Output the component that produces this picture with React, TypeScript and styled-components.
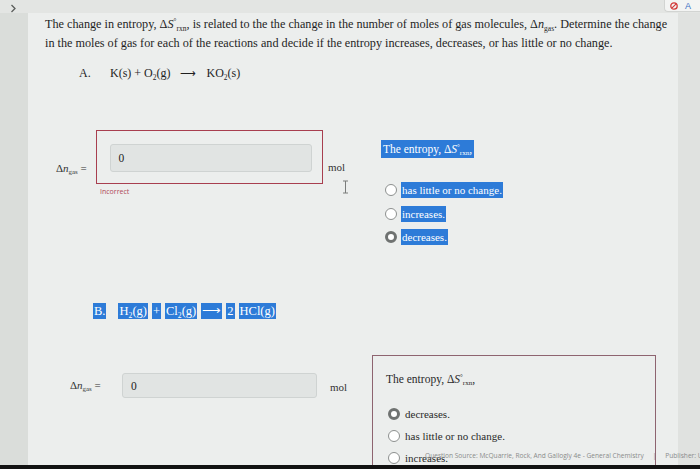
import React from "react";
import styled, { createGlobalStyle } from "styled-components";

const GlobalStyle = createGlobalStyle`
  html, body {
    margin: 0;
    padding: 0;
  }
  body {
    width: 700px;
    height: 469px;
    overflow: hidden;
    background: #e4e6e4;
    font-family: "Liberation Serif", "Times New Roman", serif;
    color: #1f1f1f;
  }
`;

const Page = styled.div`
  position: relative;
  width: 700px;
  height: 469px;
  display: flex;
  flex-direction: column;
  overflow: hidden;
`;

const TopStrip = styled.div`
  height: 14px;
  display: flex;
  justify-content: space-between;
  align-items: flex-start;
  background: #e3e5e3;
`;

const Chevron = styled.svg`
  margin: 4px 0 0 10px;
`;

const ToolButton = styled.div`
  width: 30px;
  height: 11px;
  background: #f3f4f3;
  border-left: 1px solid #d2d4d2;
  border-bottom: 1px solid #d2d4d2;
  border-radius: 0 0 0 4px;
  display: flex;
  align-items: center;
  gap: 7px;
  padding-left: 5px;
  font-family: "Liberation Sans", Arial, sans-serif;
  font-size: 9px;
  color: #3a6fc4;
`;

const Body = styled.div`
  flex: 1;
  display: flex;
`;

const Gutter = styled.div`
  width: 28px;
  background: #dadddA;
`;

const Panel = styled.main`
  width: 650px;
  background: #eceeed;
  padding: 2px 0 0 17px;
  box-sizing: border-box;
`;

const RightGutter = styled.div`
  flex: 1;
  background: #e0e2e0;
`;

const Intro = styled.p`
  margin: 0;
  width: 626px;
  font-size: 12.2px;
  line-height: 19px;
`;

const Var = styled.i`
  font-style: italic;
`;

const Sub = styled.sub`
  font-size: 0.62em;
  vertical-align: -0.35em;
  line-height: 0;
`;

const Sup = styled.sup`
  font-size: 0.6em;
  vertical-align: 0.55em;
  line-height: 0;
`;

const PartLine = styled.div<{ $indent: number; $top: number }>`
  display: flex;
  align-items: center;
  gap: 4px;
  margin: ${(p) => p.$top}px 0 0 ${(p) => p.$indent}px;
  height: 19px;
  font-size: 12px;
`;

const PartLetter = styled.span<{ $width: number }>`
  width: ${(p) => p.$width}px;
`;

const Arrow = styled.span`
  margin: 0 6px;
  font-size: 11px;
`;

const Token = styled.span`
  background: #2d7bd8;
  color: #fff;
  padding: 0 1px;
  line-height: 16px;
  font-size: 12.5px;
`;

const QuestionRow = styled.section<{ $indent: number; $top: number; $left: number }>`
  display: grid;
  grid-template-columns: ${(p) => p.$left}px 1fr;
  margin: ${(p) => p.$top}px 0 0 ${(p) => p.$indent}px;
`;

const AnswerGroup = styled.div`
  display: flex;
  align-items: flex-start;
`;

const NLabel = styled.span<{ $width: number; $top: number }>`
  width: ${(p) => p.$width}px;
  margin-top: ${(p) => p.$top}px;
  font-size: 11px;
  line-height: 13px;
  color: #333;
`;

const Field = styled.div<{ $top?: number }>`
  display: flex;
  flex-direction: column;
  margin-top: ${(p) => p.$top ?? 0}px;
`;

const ErrorFrame = styled.div`
  width: 227px;
  height: 54px;
  box-sizing: border-box;
  border: 1.5px solid #a83e4f;
  padding: 12.5px 10px 10px 12.5px;
`;

const NumberBox = styled.div<{ $width: number; $height: number }>`
  width: ${(p) => p.$width}px;
  height: ${(p) => p.$height}px;
  box-sizing: border-box;
  background: #e1e4e3;
  border: 1px solid #cfd3d2;
  border-radius: 3px;
  padding-left: 8px;
  display: flex;
  align-items: center;
  font-size: 11.5px;
  color: #222;
`;

const ErrorText = styled.span`
  margin: 3px 0 0 4px;
  font-family: "Open Sans", "Liberation Sans", sans-serif;
  font-size: 7px;
  color: #b04a58;
`;

const Unit = styled.span<{ $gap: number; $top: number }>`
  margin: ${(p) => p.$top}px 0 0 ${(p) => p.$gap}px;
  font-size: 11px;
  line-height: 13px;
  color: #333;
`;

const ChoiceColumn = styled.div`
  padding-top: 10px;
  display: flex;
  flex-direction: column;
  align-items: flex-start;
`;

const Prompt = styled.span<{ $marked?: boolean }>`
  font-size: 11.5px;
  line-height: 18px;
  padding: 0 2px;
  ${(p) => (p.$marked ? "background: #2d7bd8; color: #fff;" : "color: #2a2a2a;")}
`;

const Options = styled.div<{ $top: number; $gap: number }>`
  margin-top: ${(p) => p.$top}px;
  display: flex;
  flex-direction: column;
  gap: ${(p) => p.$gap}px;
`;

const Option = styled.label`
  display: flex;
  align-items: center;
  gap: 4px;
  margin-left: 4px;
  height: 16px;
`;

const Radio = styled.span<{ $checked?: boolean }>`
  width: 12px;
  height: 12px;
  border-radius: 50%;
  box-sizing: border-box;
  background: #fff;
  border: ${(p) => (p.$checked ? "3.5px solid #6f7271" : "1px solid #8d908f")};
`;

const OptionText = styled.span<{ $marked?: boolean }>`
  font-size: 11px;
  line-height: 16px;
  padding: 0 1px;
  ${(p) => (p.$marked ? "background: #2d7bd8; color: #fff;" : "color: #2a2a2a;")}
`;

const AnswerFrame = styled.div`
  width: 284px;
  height: 140px;
  box-sizing: border-box;
  border: 1.5px solid #8e6470;
  border-bottom: none;
  padding: 13px 0 0 11px;
`;

const Cursor = styled.svg`
  position: absolute;
  left: 342px;
  top: 180px;
`;

const SourceNote = styled.div`
  position: absolute;
  left: 425px;
  bottom: 9px;
  display: flex;
  gap: 9px;
  font-family: "Open Sans", "Liberation Sans", sans-serif;
  font-size: 6.6px;
  color: #8a8c8b;
  white-space: nowrap;
`;

const BottomEdge = styled.div`
  position: absolute;
  left: 0;
  right: 0;
  bottom: 0;
  height: 4px;
  background: #121212;
`;

const Entropy = () => (
  <>
    Δ<Var>S</Var>
    <Sup>°</Sup>
    <Sub>rxn</Sub>
  </>
);

const DeltaN = () => (
  <>
    Δ<Var>n</Var>
    <Sub>gas</Sub>
  </>
);

export default function App() {
  return (
    <Page>
      <GlobalStyle />
      <TopStrip>
        <Chevron width="7" height="9" viewBox="0 0 7 9">
          <path d="M1.5 1 L5 4.5 L1.5 8" stroke="#5a5d5b" strokeWidth="1.3" fill="none" />
        </Chevron>
        <ToolButton>
          <svg width="8" height="8" viewBox="0 0 8 8">
            <circle cx="4" cy="4" r="3.2" stroke="#d23a3a" strokeWidth="1.3" fill="none" />
            <path d="M1.8 6.2 L6.2 1.8" stroke="#d23a3a" strokeWidth="1.2" />
          </svg>
          <span>A</span>
        </ToolButton>
      </TopStrip>
      <Body>
        <Gutter />
        <Panel>
          <Intro>
            The change in entropy, <Entropy />, is related to the the change in the number of moles
            of gas molecules, <DeltaN />. Determine the change in the moles of gas for each of the
            reactions and decide if the entropy increases, decreases, or has little or no change.
          </Intro>

          <PartLine $indent={34} $top={11}>
            <PartLetter $width={27}>A.</PartLetter>
            <span>
              K(s) + O<Sub>2</Sub>(g)
            </span>
            <Arrow>⟶</Arrow>
            <span>
              KO<Sub>2</Sub>(s)
            </span>
          </PartLine>

          <QuestionRow $indent={11} $top={47} $left={325}>
            <AnswerGroup>
              <NLabel $width={40} $top={32}>
                <DeltaN /> =
              </NLabel>
              <Field>
                <ErrorFrame>
                  <NumberBox $width={202} $height={28}>0</NumberBox>
                </ErrorFrame>
                <ErrorText>Incorrect</ErrorText>
              </Field>
              <Unit $gap={5} $top={31}>mol</Unit>
            </AnswerGroup>
            <ChoiceColumn>
              <Prompt $marked>
                The entropy, <Entropy />,
              </Prompt>
              <Options $top={24} $gap={7.5}>
                <Option>
                  <Radio />
                  <OptionText $marked>has little or no change.</OptionText>
                </Option>
                <Option>
                  <Radio />
                  <OptionText $marked>increases.</OptionText>
                </Option>
                <Option>
                  <Radio $checked />
                  <OptionText $marked>decreases.</OptionText>
                </Option>
              </Options>
            </ChoiceColumn>
          </QuestionRow>

          <PartLine $indent={48} $top={56}>
            <Token>B.</Token>
            <PartLetter $width={4} />
            <Token>
              H<Sub>2</Sub>(g)
            </Token>
            <Token>+</Token>
            <Token>
              Cl<Sub>2</Sub>(g)
            </Token>
            <Token>⟶</Token>
            <Token>2</Token>
            <Token>HCl(g)</Token>
          </PartLine>

          <QuestionRow $indent={25} $top={35} $left={302}>
            <AnswerGroup>
              <NLabel $width={52} $top={24}>
                <DeltaN /> =
              </NLabel>
              <Field $top={18}>
                <NumberBox $width={195} $height={25}>0</NumberBox>
              </Field>
              <Unit $gap={13} $top={26}>mol</Unit>
            </AnswerGroup>
            <AnswerFrame>
              <Prompt>
                The entropy, <Entropy />,
              </Prompt>
              <Options $top={18} $gap={6}>
                <Option>
                  <Radio $checked />
                  <OptionText>decreases.</OptionText>
                </Option>
                <Option>
                  <Radio />
                  <OptionText>has little or no change.</OptionText>
                </Option>
                <Option>
                  <Radio />
                  <OptionText>increases.</OptionText>
                </Option>
              </Options>
            </AnswerFrame>
          </QuestionRow>
        </Panel>
        <RightGutter />
      </Body>

      <Cursor width="7" height="14" viewBox="0 0 7 14">
        <path d="M1 1 H6 M3.5 1 V13 M1 13 H6" stroke="#7a7c7b" strokeWidth="1" fill="none" />
      </Cursor>
      <SourceNote>
        <span>Question Source: McQuarrie, Rock, And Gallogly 4e - General Chemistry</span>
        <span>|</span>
        <span>Publisher: University Science Books</span>
      </SourceNote>
      <BottomEdge />
    </Page>
  );
}
